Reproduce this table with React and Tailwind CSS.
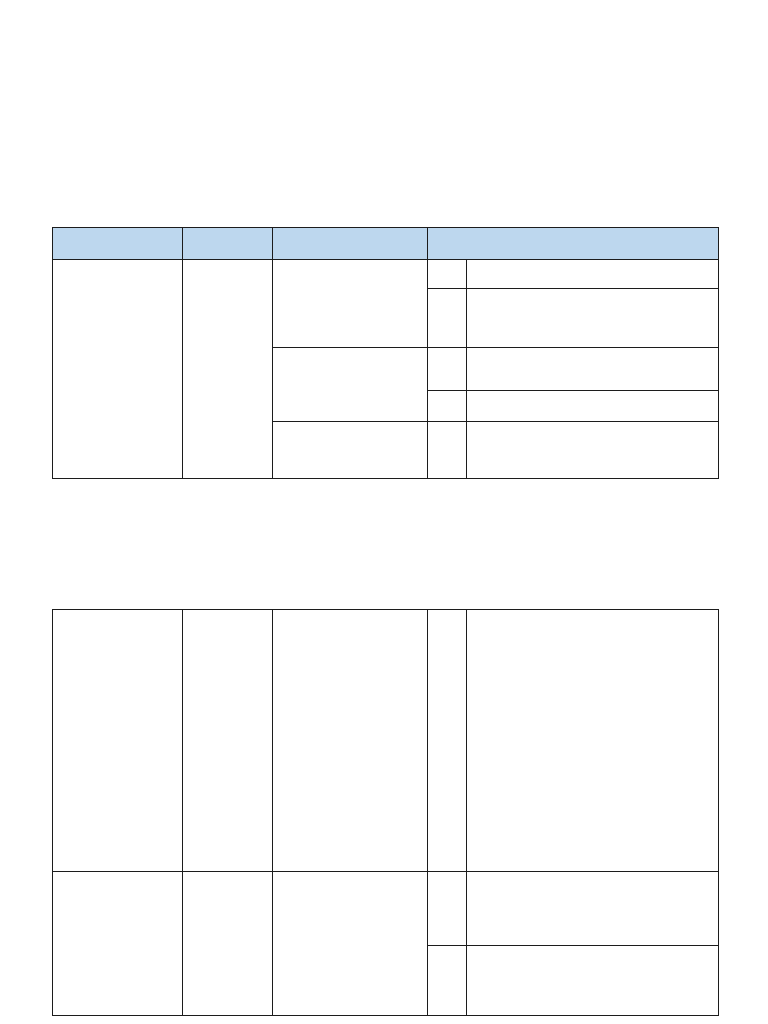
export default function App() {
  const cell = "bg-white";
  return (
    <div className="w-[768px] h-[1024px] bg-white overflow-hidden pt-[227px] pl-[52px]" style={{ fontFamily: '"Liberation Sans", Arial, sans-serif' }}>
      <div className="grid w-[667px] grid-cols-[129px_89px_154px_38px_251px] grid-rows-[31px_28px_58px_42px_30px_56px] gap-px p-px bg-[#1c1c1c]">
        <div className="bg-[#bdd7ee]" />
        <div className="bg-[#bdd7ee]" />
        <div className="bg-[#bdd7ee]" />
        <div className="bg-[#bdd7ee] col-span-2" />
        <div className={`${cell} row-span-5 col-start-1 row-start-2`} />
        <div className={`${cell} row-span-5 col-start-2 row-start-2`} />
        <div className={`${cell} row-span-2 col-start-3 row-start-2`} />
        <div className={`${cell} col-start-4 row-start-2`} />
        <div className={`${cell} col-start-5 row-start-2`} />
        <div className={`${cell} col-start-4 row-start-3`} />
        <div className={`${cell} col-start-5 row-start-3`} />
        <div className={`${cell} row-span-2 col-start-3 row-start-4`} />
        <div className={`${cell} col-start-4 row-start-4`} />
        <div className={`${cell} col-start-5 row-start-4`} />
        <div className={`${cell} col-start-4 row-start-5`} />
        <div className={`${cell} col-start-5 row-start-5`} />
        <div className={`${cell} col-start-3 row-start-6`} />
        <div className={`${cell} col-start-4 row-start-6`} />
        <div className={`${cell} col-start-5 row-start-6`} />
      </div>
      <div className="mt-[130px] grid w-[667px] grid-cols-[129px_89px_154px_38px_251px] grid-rows-[261px_73px_69px] gap-px p-px bg-[#1c1c1c]">
        <div className={`${cell} col-start-1 row-start-1`} />
        <div className={`${cell} col-start-2 row-start-1`} />
        <div className={`${cell} col-start-3 row-start-1`} />
        <div className={`${cell} col-start-4 row-start-1`} />
        <div className={`${cell} col-start-5 row-start-1`} />
        <div className={`${cell} row-span-2 col-start-1 row-start-2`} />
        <div className={`${cell} row-span-2 col-start-2 row-start-2`} />
        <div className={`${cell} row-span-2 col-start-3 row-start-2`} />
        <div className={`${cell} col-start-4 row-start-2`} />
        <div className={`${cell} col-start-5 row-start-2`} />
        <div className={`${cell} col-start-4 row-start-3`} />
        <div className={`${cell} col-start-5 row-start-3`} />
      </div>
    </div>
  );
}
